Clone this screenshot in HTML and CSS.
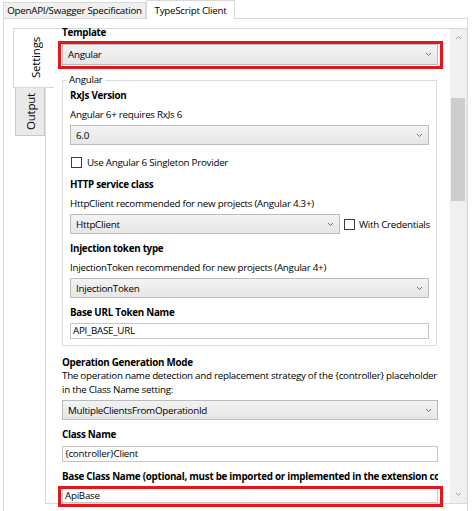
FILE: index.html
```html
<!DOCTYPE html>
<html>
<head>
<meta charset="utf-8">
<title>TypeScript Client</title>
<link rel="stylesheet" href="styles.css">
</head>
<body>
<div class="window">
  <div class="tabs">
    <div class="tab spec">OpenAPI/Swagger Specification</div>
    <div class="tab ts">TypeScript Client</div>
  </div>
  <div class="panel">
    <div class="vtabs">
      <div class="vtab settings"><span class="vlabel">Settings</span></div>
      <div class="vtab output"><span class="vlabel">Output</span></div>
    </div>
    <div class="inner">
      <div class="scroll">
        <div class="lbl first">Template</div>
        <div class="combo big hl hl-top"><span class="ctext">Angular</span><svg class="chev" width="7" height="5" viewBox="0 0 7 5"><polyline points="1,1 3.5,3.5 6,1"/></svg></div>

        <fieldset class="group">
          <legend>Angular</legend>
          <div class="lbl">RxJs Version</div>
          <div class="desc">Angular 6+ requires RxJs 6</div>
          <div class="combo"><span class="ctext">6.0</span><svg class="chev" width="7" height="5" viewBox="0 0 7 5"><polyline points="1,1 3.5,3.5 6,1"/></svg></div>
          <div class="check-row"><span class="cb"></span><span>Use Angular 6 Singleton Provider</span></div>

          <div class="lbl gap7">HTTP service class</div>
          <div class="desc">HttpClient recommended for new projects (Angular 4.3+)</div>
          <div class="combo-row">
            <div class="combo narrow"><span class="ctext">HttpClient</span><svg class="chev" width="7" height="5" viewBox="0 0 7 5"><polyline points="1,1 3.5,3.5 6,1"/></svg></div>
            <span class="cb"></span><span class="cb-text">With Credentials</span>
          </div>

          <div class="lbl gap7">Injection token type</div>
          <div class="desc">InjectionToken recommended for new projects (Angular 4+)</div>
          <div class="combo"><span class="ctext">InjectionToken</span><svg class="chev" width="7" height="5" viewBox="0 0 7 5"><polyline points="1,1 3.5,3.5 6,1"/></svg></div>

          <div class="lbl gap7">Base URL Token Name</div>
          <div class="textbox">API_BASE_URL</div>
        </fieldset>

        <div class="lbl opgen">Operation Generation Mode</div>
        <div class="desc2">The operation name detection and replacement strategy of the {controller} placeholder<br>in the Class Name setting:</div>
        <div class="combo wide"><span class="ctext">MultipleClientsFromOperationId</span><svg class="chev" width="7" height="5" viewBox="0 0 7 5"><polyline points="1,1 3.5,3.5 6,1"/></svg></div>

        <div class="lbl gap7">Class Name</div>
        <div class="textbox outer">{controller}Client</div>

        <div class="lbl gap7 clip">Base Class Name (optional, must be imported or implemented in the extension code)</div>
        <div class="textbox outer last hl hl-bottom">ApiBase</div>
      </div>
      <div class="scrollbar">
        <div class="sb-btn"><svg width="7" height="5" viewBox="0 0 7 5"><polyline points="1,4 3.5,1.5 6,4"/></svg></div>
        <div class="sb-track"><div class="sb-thumb"></div></div>
        <div class="sb-btn"><svg width="7" height="5" viewBox="0 0 7 5"><polyline points="1,1 3.5,3.5 6,1"/></svg></div>
      </div>
    </div>
  </div>
</div>
</body>
</html>
```

FILE: styles.css
```css
* { box-sizing: border-box; }
html, body { margin: 0; padding: 0; background: #fff; }
body {
  width: 474px;
  height: 511px;
  overflow: hidden;
  font-family: "Open Sans", "Noto Sans", sans-serif;
  font-size: 9.8px;
  letter-spacing: -0.27px;
  color: #000;
}
.window { width: 474px; height: 511px; overflow: hidden; }

/* top tabs */
.tabs {
  display: flex;
  align-items: flex-end;
  height: 18px;
  padding-left: 3px;
}
.tab {
  height: 16px;
  border: 1px solid #d9d9d9;
  border-bottom: none;
  background: #f0f0f0;
  display: flex;
  align-items: center;
  justify-content: center;
  white-space: nowrap;
}
.tab.spec { width: 143px; }
.tab.ts {
  width: 89px;
  height: 19px;
  margin-bottom: -1px;
  background: #fff;
  position: relative;
  z-index: 1;
}

/* outer panel */
.panel {
  margin-left: 3px;
  width: 465px;
  height: 495px;
  border: 1px solid #d9d9d9;
  padding: 9px 0 0 9px;
  display: flex;
  align-items: flex-start;
}

/* vertical tabs */
.vtabs {
  width: 32px;
  flex-shrink: 0;
  position: relative;
  z-index: 2;
}
.vtab {
  display: flex;
  align-items: center;
  justify-content: center;
}
.vtab.settings {
  width: 41px;
  height: 60px;
  border: 1px solid #d9d9d9;
  border-right: none;
  background: #fff;
  padding-left: 2px;
}
.vtab.output {
  margin-left: 2px;
  width: 30px;
  height: 48px;
  border: 1px solid #cacaca;
  border-top: none;
  background: #e9e9e9;
}
.vlabel {
  writing-mode: vertical-rl;
  transform: rotate(180deg);
  white-space: nowrap;
  font-size: 11.5px;
  letter-spacing: -0.2px;
}

/* inner panel */
.inner {
  width: 422px;
  height: 476px;
  flex-shrink: 0;
  border: 1px solid #d9d9d9;
  border-right-color: #e6e6e6;
  display: flex;
}
.scroll {
  width: 404px;
  flex-shrink: 0;
  padding: 0 12px 0 16px;
}

.lbl {
  font-weight: 700;
  line-height: 16px;
  height: 16px;
  white-space: nowrap;
}
.lbl.first { line-height: 12px; height: 12px; margin-top: -2px; }
.lbl.gap7 { margin-top: 7px; }
.lbl.opgen { line-height: 12px; height: 12px; margin-top: 11px; }
.lbl.clip { overflow: hidden; }

.desc {
  margin-top: 3px;
  line-height: 16px;
  height: 16px;
  white-space: nowrap;
}
.desc2 {
  line-height: 14px;
  white-space: nowrap;
}

/* combos */
.combo {
  margin-top: 2px;
  height: 20px;
  border: 1px solid #bcbcbc;
  background: linear-gradient(#f3f3f3, #e6e6e6);
  display: flex;
  align-items: center;
  padding: 0 5px 0 5px;
  white-space: nowrap;
}
.combo.big { margin-top: 5px; height: 21px; }
.combo.wide { margin-top: 3px; }
.combo.narrow { width: 270px; margin-top: 0; flex-shrink: 0; }
.ctext { flex: 1; }
.chev { display: block; }
.chev polyline, .sb-btn polyline {
  fill: none;
  stroke: #707070;
  stroke-width: 1;
}
.sb-btn polyline { stroke: #a3a3a3; }

/* highlight annotation */
.hl { position: relative; }
.hl::after {
  content: "";
  position: absolute;
  left: -5px;
  right: -6px;
  border: 3px solid #e3161d;
  pointer-events: none;
  z-index: 3;
}
.hl-top::after { top: -4px; bottom: -5px; }
.hl-bottom::after { top: -3px; bottom: -5px; }

/* group */
.group {
  margin: 7px 1px 0 0;
  padding: 0 7px 6px 7px;
  border: 1px solid #dcdcdc;
  min-width: 0;
}
.group legend {
  padding: 0 2px;
  margin-left: -3px;
  line-height: 16px;
  height: 16px;
}

/* checkbox */
.check-row {
  margin-top: 9px;
  height: 16px;
  display: flex;
  align-items: center;
  white-space: nowrap;
}
.cb {
  width: 11px;
  height: 11px;
  border: 1px solid #3c3c3c;
  background: #fff;
  flex-shrink: 0;
  margin: 0 5px 0 1px;
}
.combo-row {
  margin-top: 2px;
  height: 20px;
  display: flex;
  align-items: center;
  white-space: nowrap;
}
.combo-row .cb { margin: 0 4px 0 4px; }

/* text boxes */
.textbox {
  margin-top: 2px;
  height: 16px;
  border: 1px solid #c6c6c6;
  background: #fff;
  padding: 0 2px;
  line-height: 14px;
  white-space: nowrap;
}
.textbox.outer { margin-top: 3px; }
.textbox.last { height: 15px; line-height: 13px; }

/* scrollbar */
.scrollbar {
  width: 16px;
  flex-shrink: 0;
  background: #f0f0f0;
  display: flex;
  flex-direction: column;
}
.sb-btn {
  height: 17px;
  display: flex;
  align-items: center;
  justify-content: center;
  flex-shrink: 0;
}
.sb-btn svg { display: block; }
.sb-track {
  flex: 1;
  padding: 52px 1px 0 1px;
}
.sb-thumb {
  height: 103px;
  background: #cdcdcd;
}
```
